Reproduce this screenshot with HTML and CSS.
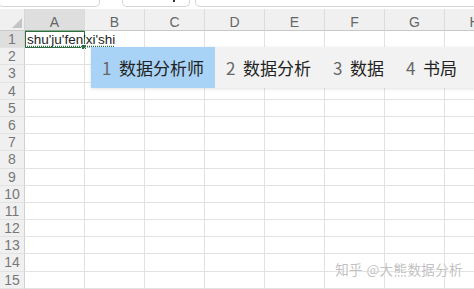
FILE: index.html
```html
<!DOCTYPE html>
<html lang="zh-CN">
<head>
  <meta charset="UTF-8">
  <title>输入法候选 - 表格</title>
  <link rel="stylesheet" href="styles.css">
</head>
<body>
  <div class="toolbar">
    <div class="tool tool-name"></div>
    <div class="tool tool-fx"><span class="tool-dot"></span></div>
    <div class="tool tool-formula"></div>
  </div>

  <div class="sheet" id="sheet"></div>

  <!-- 输入法候选框 -->
  <div class="ime">
    <div class="ime-item active"><span class="ime-num">1</span>数据分析师</div>
    <div class="ime-item"><span class="ime-num">2</span>数据分析</div>
    <div class="ime-item"><span class="ime-num">3</span>数据</div>
    <div class="ime-item"><span class="ime-num">4</span>书局</div>
  </div>

  <div class="watermark">知乎 @大熊数据分析</div>

  <script>
    const sheet = document.getElementById("sheet");
    const cols = ["A", "B", "C", "D", "E", "F", "G", "H"];

    const corner = document.createElement("div");
    corner.className = "corner";
    sheet.appendChild(corner);

    cols.forEach((c, i) => {
      const head = document.createElement("div");
      head.className = "col-head" + (i === 0 ? " selected" : "");
      head.textContent = c;
      sheet.appendChild(head);
    });

    for (let r = 1; r <= 15; r++) {
      const num = document.createElement("div");
      num.className = "row-head" + (r === 1 ? " selected" : "");
      num.textContent = r;
      sheet.appendChild(num);

      cols.forEach((c, i) => {
        const cell = document.createElement("div");
        cell.className = "cell";
        if (r === 1 && i === 0) {
          cell.classList.add("active");
          const text = document.createElement("span");
          text.className = "composing";
          text.textContent = "shu'ju'fen'xi'shi";
          cell.appendChild(text);
        }
        sheet.appendChild(cell);
      });
    }
  </script>
</body>
</html>
```

FILE: styles.css
```css
body {
  margin: 0;
  width: 474px;
  height: 289px;
  overflow: hidden;
  background: #ffffff;
  font-family: "Liberation Sans", "Noto Sans CJK SC", sans-serif;
  position: relative;
}

.toolbar {
  height: 9px;
  display: flex;
  background: #ffffff;
}

.tool {
  height: 6px;
  border: 1px solid #d4d4d4;
  border-top: none;
  border-radius: 0 0 5px 5px;
  background: #ffffff;
  position: relative;
}

.tool-name {
  width: 100px;
  margin-left: -2px;
}

.tool-fx {
  width: 66px;
  margin-left: 22px;
}

.tool-dot {
  position: absolute;
  left: 50px;
  top: 0;
  width: 2px;
  height: 2px;
  background: #333;
}

.tool-formula {
  flex: 1;
  margin-left: 5px;
  margin-right: -4px;
}

.sheet {
  display: grid;
  grid-template-columns: 25px repeat(8, 60px);
  grid-template-rows: 22px;
  grid-auto-rows: 17.2px;
}

.corner,
.col-head,
.row-head {
  background: #f0f0f0;
  color: #666;
  box-sizing: border-box;
}

.corner {
  position: relative;
  border-right: 1px solid #d6d6d6;
  border-bottom: 1px solid #c8c8c8;
}

.corner::after {
  content: "";
  position: absolute;
  right: 2px;
  bottom: 2px;
  border-left: 10px solid transparent;
  border-bottom: 10px solid #c4c4c4;
}

.col-head {
  border-right: 1px solid #dcdcdc;
  border-bottom: 1px solid #c8c8c8;
  font-size: 14px;
  text-align: center;
  line-height: 15px;
  padding-top: 6px;
  overflow: hidden;
}

.row-head {
  border-right: 1px solid #d0d0d0;
  border-bottom: 1px solid #e2e2e2;
  font-size: 14px;
  text-align: center;
  line-height: 17px;
  color: #777;
}

.col-head.selected,
.row-head.selected {
  background: #dedede;
}

.col-head.selected {
  border-bottom: 1px solid #8aa98f;
}

.cell {
  border-right: 1px solid #e2e2e2;
  border-bottom: 1px solid #e2e2e2;
  box-sizing: border-box;
  position: relative;
}

.cell.active {
  border: 1.5px solid #2f6d43;
}

.cell.active::after {
  content: "";
  position: absolute;
  right: -3px;
  bottom: -3px;
  width: 4px;
  height: 4px;
  background: #2f6d43;
  border: 1px solid #fff;
}

.composing {
  position: absolute;
  left: 1px;
  top: 0;
  font-size: 13.5px;
  line-height: 15px;
  color: #222;
  white-space: nowrap;
  text-decoration: underline dotted #2f6d43;
  text-underline-offset: 2px;
  z-index: 2;
}

.ime {
  position: absolute;
  left: 91px;
  top: 47px;
  right: -20px;
  height: 41px;
  display: flex;
  align-items: stretch;
  background: #f2f2f2;
  box-shadow: 0 1px 3px rgba(0, 0, 0, 0.12);
  font-family: "Noto Sans CJK SC", sans-serif;
  font-size: 17px;
  color: #222;
  z-index: 5;
}

.ime-item {
  display: flex;
  align-items: center;
  padding: 0 11px;
  white-space: nowrap;
}

.ime-item.active {
  background: #a8d3f6;
}

.ime-num {
  color: #666;
  margin-right: 8px;
  width: 9px;
}

.watermark {
  position: absolute;
  right: 11px;
  bottom: 10px;
  font-family: "Noto Sans CJK SC", sans-serif;
  font-size: 13.5px;
  color: rgba(175, 175, 175, 0.8);
  text-shadow: 0 0 1px #fff, 0 0 2px #fff;
  letter-spacing: 0.4px;
  z-index: 6;
}
```
